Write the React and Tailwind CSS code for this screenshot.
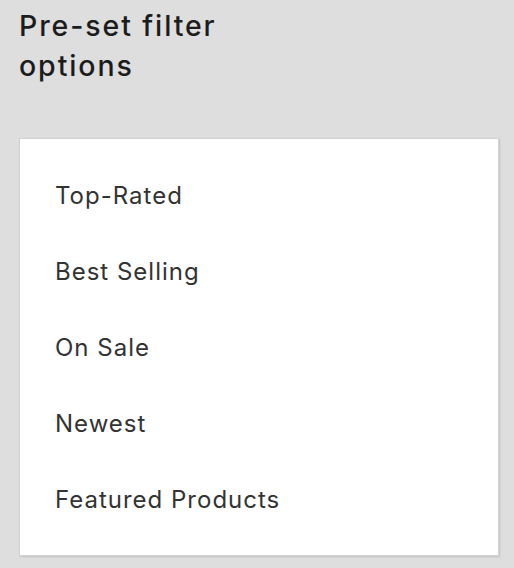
const presets = ['Top-Rated', 'Best Selling', 'On Sale', 'Newest', 'Featured Products']

export default function App() {
  return (
    <div
      className="min-h-[568px] w-full bg-[#dedede] px-[19px] pt-[6px]"
      style={{ fontFamily: 'Inter, "Noto Sans", sans-serif' }}
    >
      <h2 className="w-[240px] text-[28.5px] leading-[40px] font-medium text-[#1c1c1c] tracking-[1.9px]">
        Pre-set filter options
      </h2>
      <ul className="mt-[52px] w-[480px] h-[418px] bg-white border border-[#d2d2d2] shadow-[1px_1px_2px_rgba(0,0,0,0.12)] pt-[19px] pb-[18px] pl-[35px]">
        {presets.map((label) => (
          <li
            key={label}
            className="h-[76px] flex items-center text-[24px] tracking-[1px] text-[#333333]"
          >
            {label}
          </li>
        ))}
      </ul>
    </div>
  )
}
